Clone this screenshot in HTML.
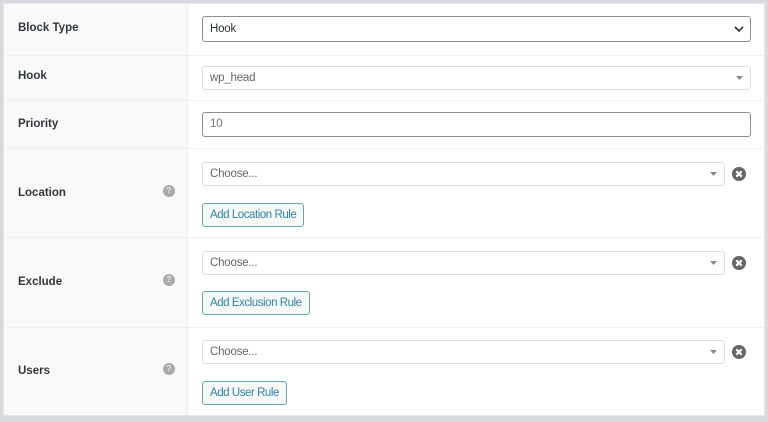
<!DOCTYPE html>
<html><head><meta charset="utf-8"><style>
*{box-sizing:border-box;margin:0;padding:0}
body{width:768px;height:422px;background:#d7dade;font-family:"Liberation Sans",sans-serif;position:relative;overflow:hidden}
.frame{position:absolute;left:3px;top:3px;width:762px;height:413px;background:#fff;border:1px solid #e6e7e8}
.lab{position:absolute;left:0;width:184px;background:#f9f9f9;border-right:1px solid #ececec}
.row{position:absolute;left:0;width:760px;border-bottom:1px solid #f0f0f0}
.l{position:absolute;left:14px;font-size:11.5px;font-weight:bold;color:#32373c}
.sel{position:absolute;left:198px;height:24px;border:1px solid #ddd;border-radius:3px;background:#fff;font-size:11.5px;color:#666;padding-left:7px;line-height:22px;letter-spacing:-0.2px}
.btn{position:absolute;left:198px;height:24px;border:1px solid #6aa6b3;border-radius:3px;background:#f6f7f7;color:#2f85a0;font-size:11.5px;line-height:22px;padding:0 7px;letter-spacing:-0.45px}
.q{position:absolute;left:159px;width:12px;height:12px;border-radius:50%;background:#aaa;color:#eee;font-size:8px;text-align:center;line-height:12px;font-weight:bold}
.x{position:absolute;left:728px}
.arr{position:absolute;right:7px;top:9px}
</style></head><body>
<div class="frame">
<div class="lab" style="top:0;height:411px"></div>
<div class="row" style="top:0;height:52px"></div>
<div class="row" style="top:52px;height:45px"></div>
<div class="row" style="top:97px;height:48px"></div>
<div class="row" style="top:145px;height:89px"></div>
<div class="row" style="top:234px;height:90px"></div>

<div class="l" style="top:18px">Block Type</div>
<div class="sel" style="top:12px;width:549px;border-color:#8c8f94;height:26px;line-height:24px;color:#2c3338">Hook
<svg style="position:absolute;right:6px;top:8px" width="10" height="8" viewBox="0 0 10 8"><path d="M1 2 L5 6 L9 2" stroke="#2c3338" stroke-width="1.6" fill="none"/></svg></div>

<div class="l" style="top:66px">Hook</div>
<div class="sel" style="top:62px;width:549px">wp_head<svg class="arr" width="7" height="4"><path d="M0 0H7L3.5 4Z" fill="#888"/></svg></div>

<div class="l" style="top:114px">Priority</div>
<div class="sel" style="top:108px;width:549px;border-color:#8c8f94;height:25px;color:#777">10</div>

<div class="l" style="top:183px">Location</div><div class="q" style="top:181px">?</div>
<div class="sel" style="top:158px;width:523px">Choose...<svg class="arr" width="7" height="4"><path d="M0 0H7L3.5 4Z" fill="#888"/></svg></div>
<svg class="x" style="top:163px" width="14" height="14" viewBox="0 0 13 13"><circle cx="6.5" cy="6.5" r="6.5" fill="#666"/><path d="M4 4L9 9M9 4L4 9" stroke="#fff" stroke-width="2"/></svg>
<div class="btn" style="top:199px">Add Location Rule</div>

<div class="l" style="top:272px">Exclude</div><div class="q" style="top:270px">?</div>
<div class="sel" style="top:247px;width:523px">Choose...<svg class="arr" width="7" height="4"><path d="M0 0H7L3.5 4Z" fill="#888"/></svg></div>
<svg class="x" style="top:252px" width="14" height="14" viewBox="0 0 13 13"><circle cx="6.5" cy="6.5" r="6.5" fill="#666"/><path d="M4 4L9 9M9 4L4 9" stroke="#fff" stroke-width="2"/></svg>
<div class="btn" style="top:287px">Add Exclusion Rule</div>

<div class="l" style="top:361px">Users</div><div class="q" style="top:359px">?</div>
<div class="sel" style="top:336px;width:523px">Choose...<svg class="arr" width="7" height="4"><path d="M0 0H7L3.5 4Z" fill="#888"/></svg></div>
<svg class="x" style="top:341px" width="14" height="14" viewBox="0 0 13 13"><circle cx="6.5" cy="6.5" r="6.5" fill="#666"/><path d="M4 4L9 9M9 4L4 9" stroke="#fff" stroke-width="2"/></svg>
<div class="btn" style="top:377px">Add User Rule</div>
</div>
</body></html>
